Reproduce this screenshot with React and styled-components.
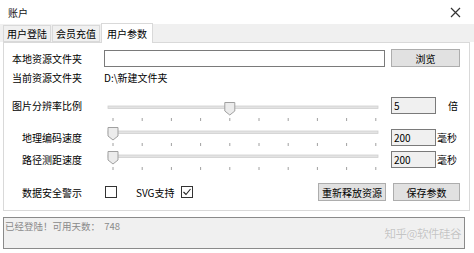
import React from "react";
import styled, { createGlobalStyle } from "styled-components";

const Global = createGlobalStyle`
  html, body { margin: 0; padding: 0; background: #ffffff; }
  body { font-family: "Noto Sans CJK SC", "Noto Sans", sans-serif; font-size: 10px; color: #000; }
  * { box-sizing: border-box; }
`;

const Window = styled.div`
  width: 474px;
  height: 253px;
  background: #ffffff;
  display: flex;
  flex-direction: column;
  overflow: hidden;
`;

const TitleBar = styled.div`
  height: 24px;
  flex: none;
  display: grid;
  grid-template-columns: 1fr 28px;
  align-items: center;
  padding: 0 0 0 8px;
  background: #ffffff;
`;

const Title = styled.span`
  font-size: 10px;
  color: #111;
`;

const CloseBox = styled.div`
  height: 24px;
  display: flex;
  align-items: center;
  justify-content: flex-start;
  padding-left: 4px;
`;

const CloseIcon = styled.svg`
  display: block;
  width: 11px;
  height: 11px;
`;

const TabStrip = styled.div`
  height: 18px;
  flex: none;
  background: #f0f0f0;
  display: flex;
  align-items: flex-end;
  padding-left: 3px;
  position: relative;
  z-index: 1;
`;

const Tab = styled.div`
  height: ${(p) => (p.$active ? 20 : 17)}px;
  padding: 0 ${(p) => (p.$active ? 5 : 3)}px;
  margin: 0 ${(p) => (p.$active ? -1 : 1)}px ${(p) => (p.$active ? -1 : 0)}px 0;
  display: flex;
  align-items: center;
  background: ${(p) => (p.$active ? "#ffffff" : "#f0f0f0")};
  border: 1px solid #d9d9d9;
  border-bottom: ${(p) => (p.$active ? "none" : "1px solid #d9d9d9")};
  font-size: 10px;
  white-space: nowrap;
`;

const Panel = styled.div`
  height: 169px;
  flex: none;
  margin: 0 4px 0 3px;
  background: #ffffff;
  border: 1px solid #d9d9d9;
  padding: 6px 9px 0 8px;
  display: flex;
  flex-direction: column;
`;

const Row = styled.div`
  display: flex;
  align-items: center;
  height: ${(p) => p.$h}px;
  margin-top: ${(p) => p.$mt || 0}px;
`;

const Label = styled.div`
  width: 92px;
  flex: none;
  padding-left: ${(p) => p.$indent || 0}px;
  font-size: 10px;
  white-space: nowrap;
`;

const TextInput = styled.div`
  width: ${(p) => p.$w}px;
  height: 17px;
  margin-top: ${(p) => p.$mt || 0}px;
  border: 1px solid #7a7a7a;
  background: ${(p) => (p.$gray ? "#f0f0f0" : "#ffffff")};
  font-size: 10px;
  line-height: 15px;
  padding-left: 2px;
  flex: none;
`;

const Button = styled.div`
  width: ${(p) => p.$w}px;
  height: 18px;
  margin-left: ${(p) => p.$ml || 0}px;
  background: #e1e1e1;
  border: 1px solid #adadad;
  display: flex;
  align-items: center;
  justify-content: center;
  font-size: 10px;
  flex: none;
`;

const Value = styled.div`
  font-size: 10px;
`;

const SliderSvg = styled.svg`
  width: 281px;
  height: 26px;
  flex: none;
  align-self: flex-start;
  margin-top: ${(p) => p.$mt}px;
  margin-right: 6px;
  overflow: visible;
`;

const Unit = styled.div`
  margin-left: ${(p) => p.$ml}px;
  font-size: 10px;
  white-space: nowrap;
`;

const Check = styled.svg`
  width: 12px;
  height: 12px;
  flex: none;
  margin-left: ${(p) => p.$ml || 0}px;
`;

const Spacer = styled.div`
  flex: 1;
`;

const StatusBar = styled.div`
  position: relative;
  height: 32px;
  flex: none;
  margin: 6px 9px 0 3px;
  background: #f0f0f0;
  border: 1px solid #8a8a8a;
  padding: 1px 0 0 1px;
  font-size: 9.5px;
  color: #8a8a8a;
`;

const Watermark = styled.div`
  position: absolute;
  right: 3px;
  bottom: 7px;
  font-size: 11.5px;
  color: #c4c4c4;
  letter-spacing: -0.5px;
  text-shadow: 0 0 1px #ffffff;
`;

function Slider({ index, mt }) {
  const ticks = Array.from({ length: 10 }, (_, i) => 9 + i * 29.2);
  const cx = ticks[index];
  return (
    <SliderSvg $mt={mt} viewBox="0 0 281 26">
      <rect x="4" y="6" width="270" height="2.5" fill="#e3e3e3" stroke="#cfcfcf" strokeWidth="0.8" />
      {ticks.map((x, i) => (
        <line key={i} x1={x} y1="18" x2={x} y2="21" stroke="#a0a0a0" strokeWidth="1" />
      ))}
      <path
        d={`M${cx - 5} 2.5 H${cx + 5} V11 L${cx} 15 L${cx - 5} 11 Z`}
        fill="#ececec"
        stroke="#a0a0a0"
        strokeWidth="1"
      />
    </SliderSvg>
  );
}

function CheckBox({ checked, ml }) {
  return (
    <Check $ml={ml} viewBox="0 0 12 12">
      <rect x="0.5" y="0.5" width="11" height="11" fill="#fff" stroke="#333" strokeWidth="1" />
      {checked && <path d="M2.5 6 L5 8.5 L9.5 3" fill="none" stroke="#222" strokeWidth="1.1" />}
    </Check>
  );
}

export default function App() {
  return (
    <>
      <Global />
      <Window>
        <TitleBar>
          <Title>账户</Title>
          <CloseBox>
            <CloseIcon viewBox="0 0 11 11">
              <path d="M1 1 L10 10 M10 1 L1 10" fill="none" stroke="#333" strokeWidth="1.2" />
            </CloseIcon>
          </CloseBox>
        </TitleBar>
        <TabStrip>
          <Tab>用户登陆</Tab>
          <Tab>会员充值</Tab>
          <Tab $active>用户参数</Tab>
        </TabStrip>
        <Panel>
          <Row $h={18}>
            <Label>本地资源文件夹</Label>
            <TextInput $w={281} $mt={1} />
            <Button $w={69} $ml={6}>浏览</Button>
          </Row>
          <Row $h={20}>
            <Label>当前资源文件夹</Label>
            <Value>D:\新建文件夹</Value>
          </Row>
          <Row $h={22} $mt={7}>
            <Label>图片分辨率比例</Label>
            <Slider index={4} mt={6} />
            <TextInput $w={45} $gray>5</TextInput>
            <Unit $ml={12}>倍</Unit>
          </Row>
          <Row $h={22} $mt={10}>
            <Label $indent={10}>地理编码速度</Label>
            <Slider index={0} mt={-1} />
            <TextInput $w={45} $gray>200</TextInput>
            <Unit $ml={1}>毫秒</Unit>
          </Row>
          <Row $h={22}>
            <Label $indent={10}>路径测距速度</Label>
            <Slider index={0} mt={1} />
            <TextInput $w={45} $gray>200</TextInput>
            <Unit $ml={1}>毫秒</Unit>
          </Row>
          <Row $h={18} $mt={13}>
            <Label $indent={10}>数据安全警示</Label>
            <CheckBox ml={1} />
            <Unit $ml={19}>SVG支持</Unit>
            <CheckBox checked ml={6} />
            <Spacer />
            <Button $w={68}>重新释放资源</Button>
            <Button $w={67} $ml={7}>保存参数</Button>
          </Row>
        </Panel>
        <StatusBar>
          已经登陆！可用天数：&nbsp;&nbsp;748
          <Watermark>知乎@软件硅谷</Watermark>
        </StatusBar>
      </Window>
    </>
  );
}
